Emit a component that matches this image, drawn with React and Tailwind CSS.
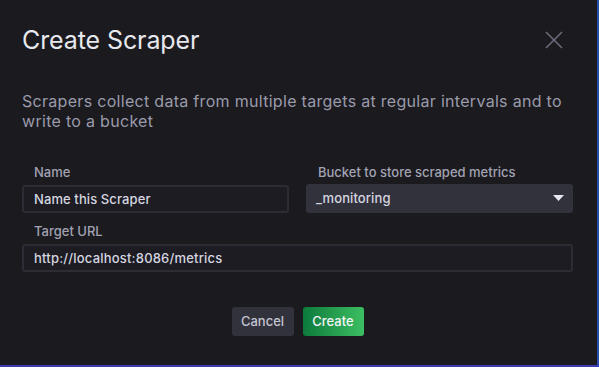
import React from 'react';

const App = () => {
  return (
    <div className="w-[599px] h-[367px] bg-[#1a1a1f] border-r-2 border-b-2 border-r-[#2a4db0] border-b-[#3b3ab0] overflow-hidden font-['Inter',sans-serif]">
      {/* Header */}
      <div className="flex items-center justify-between pl-[22px] pr-[34px] pt-[23px] h-[58px]">
        <h2 className="text-[25px] text-[#e7e8ee] font-normal tracking-[-0.1px]">Create Scraper</h2>
        <button className="text-[#6b6b7b] mt-[-2px]">
          <svg width="18" height="18" viewBox="0 0 18 18" fill="none" stroke="currentColor" strokeWidth="1.6">
            <path d="M1 1L17 17M17 1L1 17" />
          </svg>
        </button>
      </div>

      {/* Body */}
      <div className="pl-[22px] pr-[24px] pt-[33px]">
        <p className="text-[16px] leading-[20px] tracking-[0.3px] text-[#9a9aab] max-w-[548px]">
          Scrapers collect data from multiple targets at regular intervals and to write to a bucket
        </p>

        <div className="grid grid-cols-2 gap-x-[17px] mt-[32px]">
          <div>
            <label className="block pl-[12px] text-[13px] font-medium text-[#a2a2b2] leading-[18px] mb-[4px]">Name</label>
            <input
              readOnly
              value="Name this Scraper"
              className="w-full h-[28px] rounded-[3px] bg-[#1c1c22] border-2 border-[#2c2c35] px-[10px] text-[13px] tracking-[0.1px] font-medium text-[#d6d6e0] outline-none"
            />
          </div>
          <div>
            <label className="block pl-[12px] text-[13px] font-medium text-[#a2a2b2] leading-[18px] mb-[4px]">Bucket to store scraped metrics</label>
            <div className="h-[29px] -mt-px rounded-[3px] bg-[#32323d] flex items-center justify-between pl-[10px] pr-[9px]">
              <span className="text-[13px] tracking-[0.1px] font-medium text-[#d6d6e0]">_monitoring</span>
              <svg width="11" height="7" viewBox="0 0 11 7">
                <path d="M0 0H11L5.5 6Z" fill="#e7e8ee" />
              </svg>
            </div>
          </div>
        </div>

        <label className="block pl-[12px] text-[13px] font-medium text-[#a2a2b2] leading-[18px] mt-[9px] mb-[4px]">Target URL</label>
        <input
          readOnly
          value="http://localhost:8086/metrics"
          className="w-full h-[28px] rounded-[3px] bg-[#1c1c22] border-2 border-[#2c2c35] px-[10px] text-[13px] tracking-[0.2px] font-medium text-[#d6d6e0] outline-none"
        />

        <div className="flex justify-center gap-[9px] mt-[35px]">
          <button className="h-[29px] w-[62px] rounded-[3px] bg-[#32323d] text-[13px] font-medium text-[#c4c4d0]">
            Cancel
          </button>
          <button className="h-[29px] w-[61px] rounded-[3px] bg-gradient-to-r from-[#0b7a3c] to-[#3cbf62] text-[13px] font-medium text-[#f2f4f7]">
            Create
          </button>
        </div>
      </div>
    </div>
  );
};

export default App;
